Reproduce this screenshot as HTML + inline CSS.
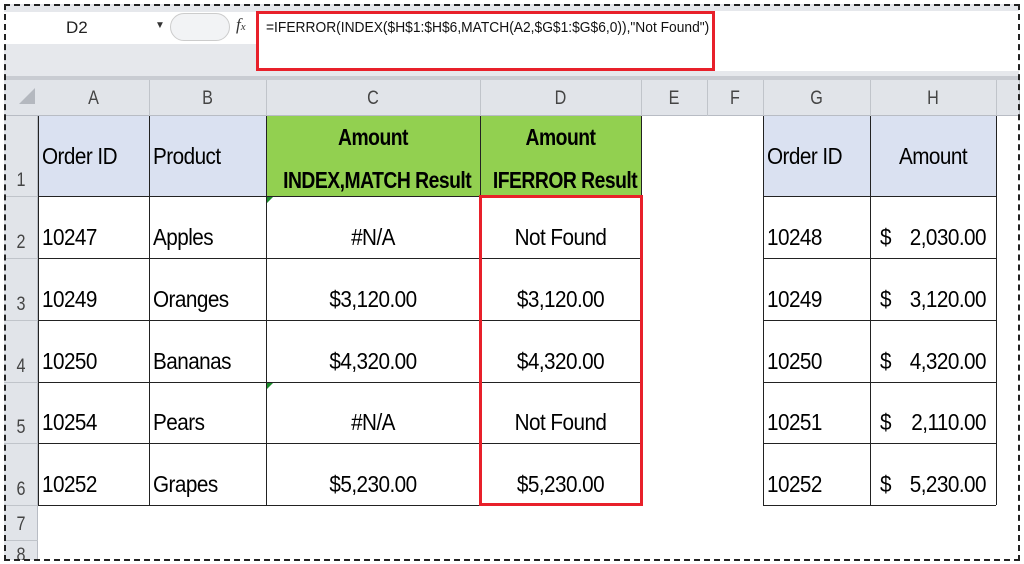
<!DOCTYPE html>
<html style="overflow:hidden"><head><meta charset="utf-8"><style>
*{margin:0;padding:0;box-sizing:border-box}
body{width:1024px;height:564px;background:#fff;position:relative;overflow:hidden;font-family:"Liberation Sans",sans-serif}
.a{position:absolute}
.t{position:absolute;font-size:23px;color:#000;white-space:nowrap;letter-spacing:-0.6px;transform:scaleX(0.9);transform-origin:left center}
.c{transform-origin:center center}
.b{font-weight:bold;transform:scaleX(0.84)}
.hd{position:absolute;font-size:19px;color:#444;transform:scaleX(.85)}
.vl{position:absolute;width:1px;background:#222}
.hl{position:absolute;height:1px;background:#222}
#wrap{position:absolute;left:0;top:0;width:1024px;height:560px;overflow:hidden}
</style></head><body>
<div id="wrap">
<div class="a" style="left:4px;top:4px;width:1015px;height:72px;background:#e6e8ec"></div>
<div class="a" style="left:4px;top:12px;width:252px;height:32px;background:#fff"></div>
<div class="a" style="left:256px;top:11px;width:763px;height:60px;background:#fff"></div>
<div class="a" style="left:66px;top:18px;font-size:17px;color:#222">D2</div>
<div class="a" style="left:155px;top:20px;font-size:10px;color:#333">▼</div>
<div class="a" style="left:170px;top:13px;width:60px;height:28px;border:1px solid #ccc;border-radius:14px;background:#f2f3f5"></div>
<div class="a" style="left:236px;top:15px;font-family:'Liberation Serif',serif;font-style:italic;font-size:17px;color:#333">f<span style="font-size:11px">x</span></div>
<div class="a" style="left:256px;top:11px;width:459px;height:60px;border:3px solid #e8202a"></div>
<div class="a" style="left:266px;top:19px;font-size:15px;color:#111;transform:scaleX(.92);transform-origin:left;white-space:nowrap">=IFERROR(INDEX($H$1:$H$6,MATCH(A2,$G$1:$G$6,0)),"Not Found")</div>
<div class="a" style="left:4px;top:76px;width:1015px;height:4px;background:#c9ccd2"></div>
<div class="a" style="left:4px;top:80px;width:1015px;height:36px;background:#e1e4e9;border-bottom:1px solid #b8bcc4"></div>
<div class="a" style="left:4px;top:116px;width:34px;height:444px;background:#e1e4e9;border-right:1px solid #b8bcc4"></div>
<div class="a" style="left:19px;top:88px;width:0;height:0;border-left:16px solid transparent;border-bottom:16px solid #b4b8bf"></div>
<div class="a" style="left:38px;top:116px;width:228px;height:80px;background:#dae1f1"></div>
<div class="a" style="left:266px;top:116px;width:375px;height:80px;background:#92d050"></div>
<div class="a" style="left:763px;top:116px;width:233px;height:80px;background:#dae1f1"></div>
<div id="g"></div>
</div>
<div class="a" style="left:4px;top:4px;width:1016px;height:557px;border:2px dashed #222"></div>
<script>
var h='';
var cols=[[38,149,'A'],[149,266,'B'],[266,480,'C'],[480,641,'D'],[641,707,'E'],[707,763,'F'],[763,870,'G'],[870,996,'H'],[996,1019,'']];
cols.forEach(function(c){h+='<div class="a" style="left:'+c[1]+'px;top:80px;width:1px;height:36px;background:#c0c4ca"></div>';
h+='<div class="hd" style="left:'+c[0]+'px;width:'+(c[1]-c[0])+'px;top:88px;text-align:center">'+c[2]+'</div>';});
var rows=[[116,196],[196,258],[258,320],[320,382],[382,443],[443,505],[505,540],[540,580]];
rows.forEach(function(r,i){h+='<div class="a" style="left:4px;top:'+r[1]+'px;width:34px;height:1px;background:#c0c4ca"></div>';
var ty=i==7?545:(r[1]-26);
h+='<div class="hd" style="left:4px;width:34px;text-align:center;top:'+ty+'px">'+(i+1)+'</div>';});
[38,149,266,480,641].forEach(function(x){h+='<div class="vl" style="left:'+x+'px;top:116px;height:389px"></div>'});
[763,870,996].forEach(function(x){h+='<div class="vl" style="left:'+x+'px;top:116px;height:389px"></div>'});
[196,258,320,382,443,505].forEach(function(y){h+='<div class="hl" style="left:38px;top:'+y+'px;width:603px"></div><div class="hl" style="left:763px;top:'+y+'px;width:233px"></div>'});
var data=[['10247','Apples','#N/A','Not Found','10248','2,030.00'],['10249','Oranges','$3,120.00','$3,120.00','10249','3,120.00'],['10250','Bananas','$4,320.00','$4,320.00','10250','4,320.00'],['10254','Pears','#N/A','Not Found','10251','2,110.00'],['10252','Grapes','$5,230.00','$5,230.00','10252','5,230.00']];
data.forEach(function(d,i){var y=rows[i+1][1]-34;
h+='<div class="t" style="left:42px;top:'+y+'px">'+d[0]+'</div>';
h+='<div class="t" style="left:153px;top:'+y+'px">'+d[1]+'</div>';
h+='<div class="t c" style="left:266px;width:214px;text-align:center;top:'+y+'px">'+d[2]+'</div>';
h+='<div class="t c" style="left:480px;width:161px;text-align:center;top:'+y+'px">'+d[3]+'</div>';
h+='<div class="t" style="left:767px;top:'+y+'px">'+d[4]+'</div>';
h+='<div class="t" style="left:880px;top:'+y+'px">$</div>';
h+='<div class="t" style="left:870px;width:116px;text-align:right;transform-origin:right center;top:'+y+'px">'+d[5]+'</div>';});
h+='<div class="t" style="left:42px;top:143px">Order ID</div><div class="t" style="left:153px;top:143px">Product</div>';
h+='<div class="t c b" style="left:266px;width:214px;text-align:center;top:124px">Amount</div>';
h+='<div class="t c b" style="left:266px;width:214px;text-align:center;top:167px">INDEX,MATCH Result</div>';
h+='<div class="t c b" style="left:480px;width:161px;text-align:center;top:124px">Amount</div>';
h+='<div class="t c b" style="left:480px;width:161px;text-align:center;top:167px">IFERROR Result</div>';
h+='<div class="t" style="left:767px;top:143px">Order ID</div><div class="t c" style="left:870px;width:126px;text-align:center;top:143px">Amount</div>';
h+='<div class="a" style="left:267px;top:197px;width:0;height:0;border-top:6px solid #1a8a2a;border-right:6px solid transparent"></div>';
h+='<div class="a" style="left:267px;top:383px;width:0;height:0;border-top:6px solid #1a8a2a;border-right:6px solid transparent"></div>';
h+='<div class="a" style="left:479px;top:195px;width:164px;height:311px;border:3px solid #e8202a"></div>';
document.getElementById('g').innerHTML=h;
</script>
</body></html>
